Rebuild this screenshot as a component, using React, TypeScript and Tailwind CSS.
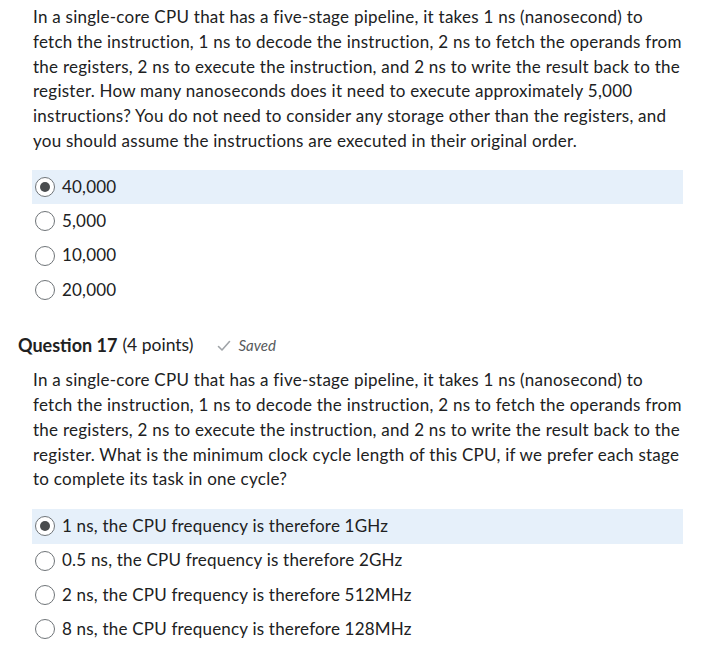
import { useState } from 'react'

type Question = {
  text: string
  options: string[]
}

const FIRST: Question = {
  text:
    'In a single-core CPU that has a five-stage pipeline, it takes 1 ns (nanosecond) to fetch the instruction, 1 ns to decode the instruction, 2 ns to fetch the operands from the registers, 2 ns to execute the instruction, and 2 ns to write the result back to the register. How many nanoseconds does it need to execute approximately 5,000 instructions? You do not need to consider any storage other than the registers, and you should assume the instructions are executed in their original order.',
  options: ['40,000', '5,000', '10,000', '20,000'],
}

const SECOND: Question = {
  text:
    'In a single-core CPU that has a five-stage pipeline, it takes 1 ns (nanosecond) to fetch the instruction, 1 ns to decode the instruction, 2 ns to fetch the operands from the registers, 2 ns to execute the instruction, and 2 ns to write the result back to the register. What is the minimum clock cycle length of this CPU, if we prefer each stage to complete its task in one cycle?',
  options: [
    '1 ns, the CPU frequency is therefore 1GHz',
    '0.5 ns, the CPU frequency is therefore 2GHz',
    '2 ns, the CPU frequency is therefore 512MHz',
    '8 ns, the CPU frequency is therefore 128MHz',
  ],
}

function Radio({ checked }: { checked: boolean }) {
  return (
    <span className="flex h-[20px] w-[20px] shrink-0 items-center justify-center rounded-full border border-[#6f7478] bg-white">
      {checked && <span className="h-[10px] w-[10px] rounded-full bg-[#494c4e]" />}
    </span>
  )
}

function Options({ options, selected, onSelect }: { options: string[]; selected: number; onSelect: (i: number) => void }) {
  return (
    <div className="mr-[40px] ml-[32px]">
      {options.map((opt, i) => (
        <label
          key={opt}
          onClick={() => onSelect(i)}
          className={`flex h-[34.4px] cursor-pointer items-center gap-[7px] pl-[3px] text-[17px] tracking-[0.2px] ${i === selected ? 'bg-[#e6f0fa]' : ''}`}
        >
          <Radio checked={i === selected} />
          <span>{opt}</span>
        </label>
      ))}
    </div>
  )
}

export default function App() {
  const [first, setFirst] = useState(0)
  const [second, setSecond] = useState(0)

  return (
    <div className="min-h-[655px] bg-white pt-[5px] text-[16px] leading-[24.8px] text-[#202122] [font-family:Lato,'Noto_Sans',sans-serif]">
      <p className="ml-[33px] w-[649px] text-[17px] tracking-[0.25px]">{FIRST.text}</p>
      <div className="mt-[16px]">
        <Options options={FIRST.options} selected={first} onSelect={setFirst} />
      </div>

      <div className="mt-[26px] ml-[18px] flex items-center">
        <h3 className="text-[18px] font-bold">Question 17</h3>
        <span className="ml-[5px] text-[17.5px]">(4 points)</span>
        <span className="ml-[24px] flex items-center gap-[7px] text-[15px] text-[#565a5c] italic">
          <svg width="14" height="12" viewBox="0 0 14 12" fill="none">
            <path d="M1.5 6.5 L5 10 L12.5 1.5" stroke="#a0a4a8" strokeWidth="1.6" strokeLinecap="round" strokeLinejoin="round" />
          </svg>
          Saved
        </span>
      </div>

      <p className="mt-[10px] ml-[33px] w-[649px] text-[17px] tracking-[0.25px]">{SECOND.text}</p>
      <div className="mt-[17px]">
        <Options options={SECOND.options} selected={second} onSelect={setSecond} />
      </div>
    </div>
  )
}
